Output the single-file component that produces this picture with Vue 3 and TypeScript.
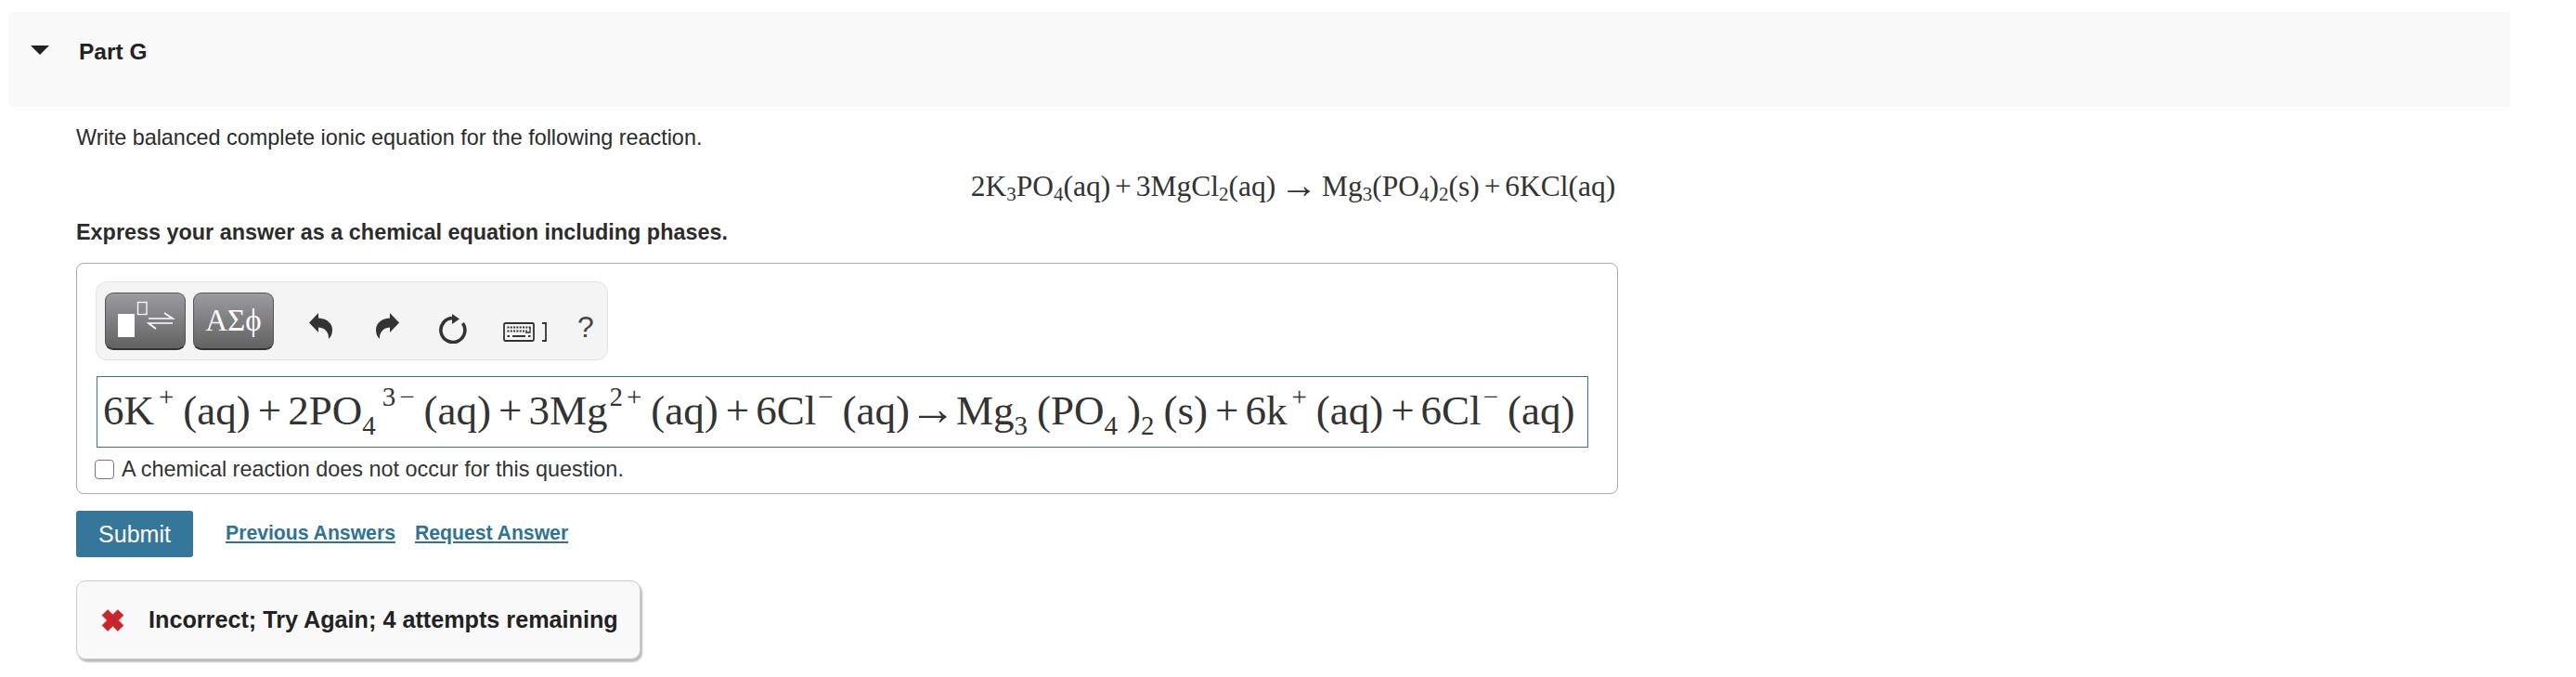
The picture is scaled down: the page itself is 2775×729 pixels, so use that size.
<script setup lang="ts">
const title: string = 'Part G'
</script>

<template>
  <div class="page">
    <header class="band">
      <svg class="caret" viewBox="0 0 20 10" width="20" height="10"><path d="M0 0H20L10 10Z" fill="#222" /></svg>
      <span class="part">{{ title }}</span>
    </header>
    <main class="content">
      <p class="prompt">Write balanced complete ionic equation for the following reaction.</p>
      <div class="reaction">
        <span>2K<sub>3</sub>PO<sub>4</sub>(aq) + 3MgCl<sub>2</sub>(aq) <span class="rarrow">→</span> Mg<sub>3</sub>(PO<sub>4</sub>)<sub>2</sub>(s) + 6KCl(aq)</span>
      </div>
      <p class="express">Express your answer as a chemical equation including phases.</p>
      <section class="box">
        <div class="toolbar">
          <button class="tool templates" type="button" aria-label="Templates">
            <svg viewBox="0 0 87 62" width="87" height="62">
              <rect x="14" y="23" width="18" height="25" fill="#fff" />
              <rect x="35.500" y="10.500" width="9.500" height="13" fill="none" stroke="#fff" stroke-width="1.300" />
              <path d="M47 28H73L64 22M73 33H47L55 39" fill="none" stroke="#fff" stroke-width="1.700" />
            </svg>
          </button>
          <button class="tool symbols" type="button">ΑΣϕ</button>
          <svg class="ico undo" viewBox="0 0 25 29" width="25" height="29"><path d="M0 10.500L10 0V5.500C20 6 25 12 25 18C25 22 24 25 21 28C21.500 22 18 16 10 15.500V21Z" fill="#333" /></svg>
          <svg class="ico redo" viewBox="0 0 25 29" width="25" height="29"><path d="M25 10.500L15 0V5.500C5 6 0 12 0 18C0 22 1 25 4 28C3.500 22 7 16 15 15.500V21Z" fill="#333" /></svg>
          <svg class="ico reset" viewBox="0 0 30 32" width="30" height="32"><path d="M25.500 10A13 13 0 1 1 14 4.500" fill="none" stroke="#333" stroke-width="3.600" /><path d="M14 0L22 5.500L14 11Z" fill="#333" /></svg>
          <svg class="ico keys" viewBox="0 0 48 21" width="48" height="21">
            <rect x="1" y="1" width="32" height="19" rx="1.500" fill="#f4f4f4" stroke="#333" stroke-width="1.800" />
            <path d="M4.500 5.500H29.500M4.500 9.500H26" stroke="#333" stroke-width="1.800" stroke-dasharray="2 1.300" />
            <path d="M29 5V11H24" fill="none" stroke="#333" stroke-width="1.300" />
            <path d="M4.500 15H7M10 15H24M27 15H29.500" stroke="#333" stroke-width="1.800" />
            <path d="M42 1H46V20H42" fill="none" stroke="#333" stroke-width="1.800" />
          </svg>
          <span class="help">?</span>
        </div>
        <div class="answer">
          <span>6K</span><sup class="up lone">+</sup><span class="p">(aq)</span><span class="op">+</span><span>2PO</span><sub class="dn">4</sub><sup class="up wide">3<i class="gap">−</i></sup><span class="p">(aq)</span><span class="op">+</span><span>3Mg</span><sup class="up">2<i class="gap">+</i></sup><span class="p">(aq)</span><span class="op">+</span><span>6Cl</span><sup class="up">−</sup><span class="p">(aq)</span><span class="arrow">→</span><span>Mg</span><sub class="dn">3</sub><span class="p">(PO</span><sub class="dn">4</sub><span class="p">)</span><sub class="dn tight">2</sub><span class="p">(s)</span><span class="op">+</span><span>6k</span><sup class="up lone">+</sup><span class="p">(aq)</span><span class="op">+</span><span>6Cl</span><sup class="up">−</sup><span class="p">(aq)</span>
        </div>
        <label class="none">
          <input type="checkbox" />
          <span>A chemical reaction does not occur for this question.</span>
        </label>
      </section>
      <div class="actions">
        <button class="submit" type="button">Submit</button>
        <a class="link first" href="#">Previous Answers</a>
        <a class="link" href="#">Request Answer</a>
      </div>
      <div class="feedback">
        <svg class="cross" viewBox="0 0 24 24" width="27" height="26"><path d="M7 1.500L12 6.500L17 1.500L22.500 7L17.500 12L22.500 17L17 22.500L12 17.500L7 22.500L1.500 17L6.500 12L1.500 7Z" fill="#c9252d" stroke="#c9252d" stroke-width="0.800" stroke-linejoin="round" /></svg>
        <span>Incorrect; Try Again; 4 attempts remaining</span>
      </div>
    </main>
  </div>
</template>

<style>
html, body { margin: 0; background: #fff; }
</style>

<style scoped>
.page { width: 2775px; height: 729px; box-sizing: border-box; padding: 13px 71px 0 9px; overflow: hidden; font-family: "Liberation Sans", Arial, sans-serif; color: #2b2b2b; }
.band { height: 102px; background: #f9f9f9; display: flex; align-items: flex-start; padding: 36px 0 0 24px; box-sizing: border-box; }
.part { margin-left: 32px; font-size: 24.500px; font-weight: 700; line-height: 28px; color: #222; margin-top: -7px; }
.content { margin-left: 73px; }
.prompt { margin: 18px 0 0; font-size: 23.400px; line-height: 30px; }
.reaction { margin-top: 18px; text-align: center; font-family: "Liberation Serif", serif; font-size: 31.500px; word-spacing: -3px; line-height: 40px; color: #333; }
.reaction sub { font-size: 21px; line-height: 0; vertical-align: -5px; }
.rarrow { font-size: 40px; line-height: 0; vertical-align: -2px; }
.express { margin: 14px 0 0; font-size: 23.400px; line-height: 30px; font-weight: 700; }
.box { margin-top: 18px; width: 1661px; height: 249px; border: 1px solid #aaa; border-radius: 8px; padding: 19px 20px 0; box-sizing: border-box; }
.toolbar { display: flex; align-items: center; width: 552px; height: 85px; box-sizing: border-box; background: #f4f4f4; border: 1px solid #e2e2e2; border-radius: 12px; padding-left: 9px; }
.tool { width: 87px; height: 62px; padding: 0; border: 1px solid #555; border-bottom: 2px solid #333; border-radius: 9px; background: linear-gradient(#9b9ba0, #626262); color: #fff; flex: none; }
.tool svg { display: block; margin: -1px; }
.symbols { margin-left: 8px; font-family: "Liberation Serif", serif; font-size: 33px; }
.ico { flex: none; }
.undo { margin: 12px 0 0 38px; }
.redo { margin: 12px 0 0 47px; }
.reset { margin: 16px 0 0 43px; }
.keys { margin: 24px 0 0 39px; }
.help { margin: 14px 0 0 32px; font-size: 32px; color: #444; }
.answer { margin: 17px 0 0 1px; width: 1607px; height: 77px; box-sizing: border-box; border: 1.500px solid #35779b; padding-left: 6px; display: flex; align-items: baseline; font-family: "Liberation Serif", serif; font-size: 45px; line-height: 68px; color: #333; white-space: nowrap; }
.p { margin-left: 10px; }
.op { margin: 0 7px 0 8px; }
.arrow { margin: 0; font-size: 50px; font-weight: 700; }
.up, .dn { font-size: 29px; line-height: 0; }
.up { position: relative; top: -20px; margin-left: 2px; vertical-align: baseline; }
.dn { position: relative; top: 11px; }
.lone { margin-left: 5px; }
.wide { margin-left: 7px; }
.tight { margin-left: 0; }
.gap { font-style: normal; margin-left: 4px; }
.none { display: flex; align-items: center; margin-top: 13px; height: 21px; font-size: 23.400px; color: #333; }
.none input { appearance: none; flex: none; width: 21px; height: 21px; margin: 0 8px 0 -1px; border: 1.500px solid #777; border-radius: 4px; background: #fff; }
.actions { margin-top: 18px; display: flex; align-items: center; }
.submit { width: 126px; height: 50px; border: 0; border-radius: 3px; background: #35779b; color: #fff; font: 25px "Liberation Sans", Arial, sans-serif; padding: 0; }
.link { color: #2d7298; font-size: 21.200px; font-weight: 700; text-decoration: underline; margin: -2px 0 0 21px; }
.first { margin-left: 35px; }
.feedback { margin-top: 25px; width: 608px; height: 85px; box-sizing: border-box; display: flex; align-items: center; padding-left: 25px; background: #f9f9f9; border: 1px solid #ccc; border-radius: 10px; box-shadow: 2px 3px 2px #bbb; font-size: 25.200px; font-weight: 700; color: #222; }
.cross { flex: none; margin-right: 25px; }
</style>
